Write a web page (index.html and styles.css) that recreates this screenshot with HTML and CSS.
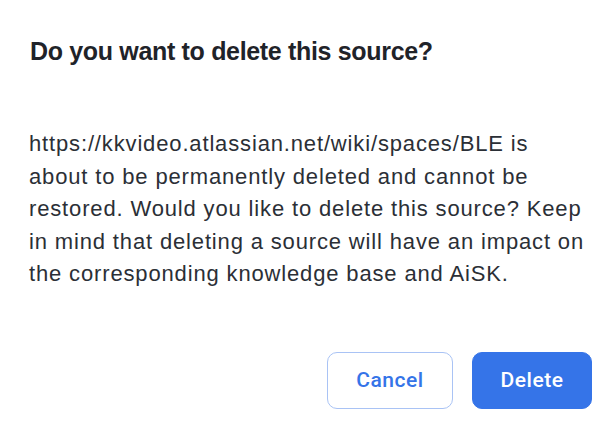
FILE: index.html
```html
<!DOCTYPE html>
<html>
<head>
<meta charset="utf-8">
<link rel="stylesheet" href="styles.css">
</head>
<body>
<div class="dialog">
  <h1 class="title">Do you want to delete this source?</h1>
  <p class="message">https://kkvideo.atlassian.net/wiki/spaces/BLE is about to be permanently deleted and cannot be restored. Would you like to delete this source? Keep in mind that deleting a source will have an impact on the corresponding knowledge base and AiSK.</p>
  <div class="actions">
    <button class="btn btn-cancel">Cancel</button>
    <button class="btn btn-delete">Delete</button>
  </div>
</div>
</body>
</html>
```

FILE: styles.css
```css
* { box-sizing: border-box; }
html, body { margin: 0; padding: 0; background: #fff; }
body { font-family: "Liberation Sans", Arial, sans-serif; }
.dialog {
  width: 614px;
  height: 434px;
  padding: 36px 22px 0 29px;
  display: flex;
  flex-direction: column;
}
.title {
  margin: 0;
  font-size: 25px;
  line-height: 30px;
  font-weight: 700;
  letter-spacing: -0.33px;
  color: #1f2329;
  padding-left: 1px;
}
.message {
  margin: 62px 0 0 0;
  font-size: 22px;
  line-height: 32.5px;
  letter-spacing: 0.85px;
  color: #2b2f36;
}
.actions {
  margin-top: 61px;
  display: flex;
  justify-content: flex-end;
  gap: 19px;
}
.btn {
  height: 57px;
  border-radius: 10px;
  font-family: Roboto, "Liberation Sans", Arial, sans-serif;
  font-size: 21px;
  letter-spacing: 0.5px;
  font-weight: 500;
  cursor: pointer;
}
.btn-cancel {
  width: 126px;
  background: #fff;
  border: 1px solid #a9c3f5;
  color: #3574e8;
}
.btn-delete {
  width: 120px;
  background: #3574e8;
  border: 1px solid #3574e8;
  color: #fff;
}
```
